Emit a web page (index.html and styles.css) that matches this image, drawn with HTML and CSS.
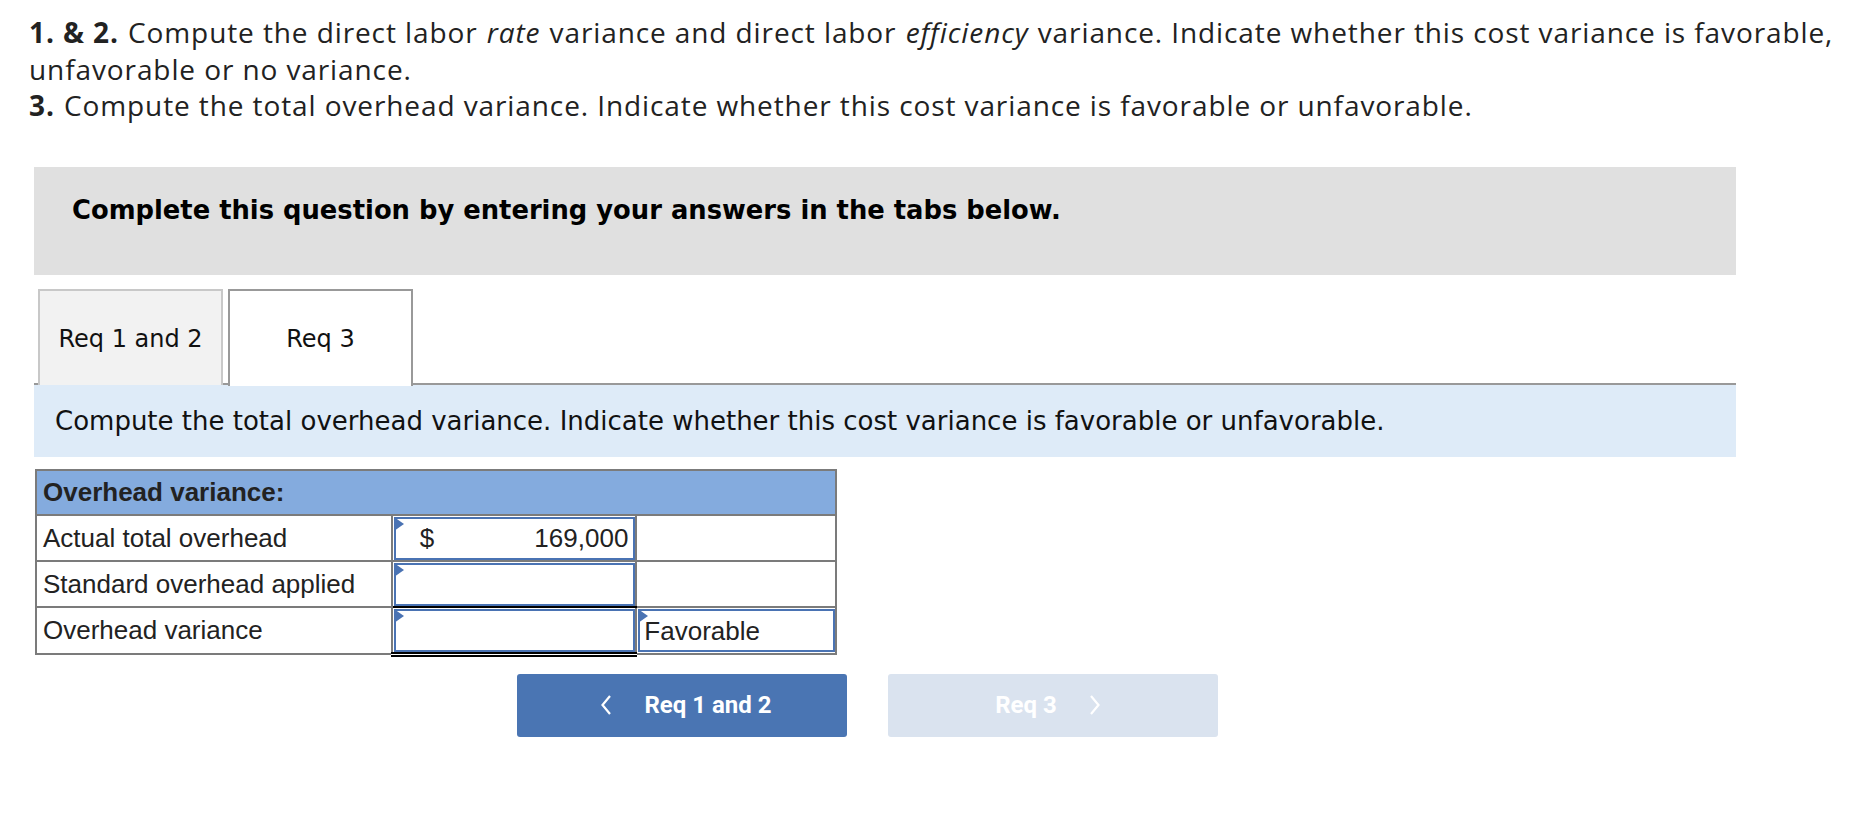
FILE: index.html
```html
<!DOCTYPE html>
<html>
<head>
<meta charset="utf-8">
<link rel="stylesheet" href="styles.css">
</head>
<body>
<div class="page">
  <div class="question">
    <div class="qline"><b>1. &amp; 2.</b> Compute the direct labor <i>rate</i> variance and direct labor <i>efficiency</i> variance. Indicate whether this cost variance is favorable,</div>
    <div class="qline">unfavorable or no variance.</div>
    <div class="qline"><b>3.</b> Compute the total overhead variance. Indicate whether this cost variance is favorable or unfavorable.</div>
  </div>

  <div class="panel">
    <div class="notice">Complete this question by entering your answers in the tabs below.</div>

    <div class="tabs">
      <div class="tab">Req 1 and 2</div>
      <div class="tab active">Req 3</div>
    </div>

    <div class="instr">Compute the total overhead variance. Indicate whether this cost variance is favorable or unfavorable.</div>

    <table class="grid">
      <colgroup>
        <col class="c1"><col class="c2"><col class="c3">
      </colgroup>
      <tr class="head"><th colspan="3">Overhead variance:</th></tr>
      <tr>
        <td class="label">Actual total overhead</td>
        <td class="inp"><div class="box"><span class="mark"></span><span class="cur">$</span><span class="val">169,000</span></div></td>
        <td></td>
      </tr>
      <tr>
        <td class="label">Standard overhead applied</td>
        <td class="inp single"><div class="box"><span class="mark"></span></div></td>
        <td></td>
      </tr>
      <tr>
        <td class="label">Overhead variance</td>
        <td class="inp double"><div class="box"><span class="mark"></span></div></td>
        <td class="inp"><div class="box"><span class="mark"></span><span class="txt">Favorable</span></div></td>
      </tr>
    </table>

    <div class="nav">
      <button class="btn prev"><svg class="chev" width="12" height="22" viewBox="0 0 12 22"><path d="M10 2 L2.5 11 L10 20" fill="none" stroke="#fff" stroke-width="2.2"/></svg><span>Req 1 and 2</span></button>
      <button class="btn next"><span>Req 3</span><svg class="chev" width="12" height="22" viewBox="0 0 12 22"><path d="M2 2 L9.5 11 L2 20" fill="none" stroke="#fff" stroke-width="2.2"/></svg></button>
    </div>
  </div>
</div>
</body>
</html>
```

FILE: styles.css
```css
html, body {
  margin: 0;
  padding: 0;
  background: #fff;
}

.page {
  padding: 14px 8px 0 29px;
}

.question {
  font-family: "Open Sans", Lato, sans-serif;
  font-size: 28px;
  letter-spacing: 0.9px;
  line-height: 36.5px;
  color: #222;
}

.qline {
  white-space: nowrap;
}

.question b {
  font-weight: 700;
  margin-right: 1px;
}

.question i {
  margin: 0 1px;
}

.panel {
  margin: 43px 0 0 5px;
  width: 1702px;
}

.notice {
  box-sizing: border-box;
  height: 108px;
  background: #e0e0e0;
  padding: 28px 0 0 38px;
  font-family: "DejaVu Sans", Verdana, sans-serif;
  font-weight: bold;
  font-size: 25.8px;
  line-height: 30px;
  color: #000;
}

.tabs {
  display: flex;
  gap: 5px;
  margin-top: 14px;
  padding-left: 4px;
  height: 96px;
  position: relative;
  z-index: 1;
}

.tab {
  box-sizing: border-box;
  width: 185px;
  height: 96px;
  display: flex;
  align-items: center;
  justify-content: center;
  background: #f2f2f2;
  border: 2px solid #c8c8c8;
  border-bottom: none;
  font-family: "DejaVu Sans", Verdana, sans-serif;
  font-size: 24px;
  color: #111;
  padding-top: 2px;
}

.tab.active {
  background: #fff;
  border-color: #999;
  height: 97px;
}

.instr {
  box-sizing: border-box;
  height: 74px;
  border-top: 2px solid #999;
  margin-top: -2px;
  background: #deebf8;
  display: flex;
  align-items: center;
  padding-left: 21px;
  font-family: "DejaVu Sans", Verdana, sans-serif;
  font-size: 26px;
  color: #111;
}

.grid {
  margin-top: 12px;
  margin-left: 1px;
  border-collapse: collapse;
  width: 802px;
  font-family: "Liberation Sans", Arial, sans-serif;
  font-size: 26px;
  line-height: 30px;
  color: #222;
}

.grid col.c1 { width: 357px; }
.grid col.c2 { width: 245px; }
.grid col.c3 { width: 200px; }

.grid th, .grid td {
  border: 2px solid #7b7b7b;
  padding: 0;
}

.grid tr.head th {
  background: #84abde;
  text-align: left;
  padding-left: 6px;
  font-weight: bold;
  line-height: 43px;
}

.grid td.label {
  padding-left: 6px;
}

.grid td.inp {
  padding: 1px 0 0 1px;
}

.grid td.single { border-bottom: 2px solid #000; }
.grid td.double { border-bottom: 5px double #000; }

.box {
  position: relative;
  box-sizing: border-box;
  height: 43px;
  border: 2px solid #4a73b3;
  background: #fff;
  display: flex;
  align-items: center;
}

.mark {
  position: absolute;
  left: -2px;
  top: -2px;
  width: 0;
  height: 0;
  border-left: 10px solid #4a73b3;
  border-top: 7px solid transparent;
  border-bottom: 7px solid transparent;
}

.cur { margin-left: 24px; }
.val { margin-left: auto; margin-right: 5px; }
.txt { margin-left: 4px; }

.nav {
  display: flex;
  gap: 41px;
  margin-top: 17px;
  padding-left: 483px;
}

.btn {
  box-sizing: border-box;
  width: 330px;
  height: 63px;
  border: none;
  border-radius: 3px;
  display: flex;
  align-items: center;
  justify-content: center;
  gap: 32px;
  font-family: Roboto, sans-serif;
  font-weight: bold;
  font-size: 24px;
  color: #fff;
  padding: 0;
}

.btn.prev {
  background: #4a75b3;
  padding-left: 8px;
}

.btn.next {
  background: #dae3ef;
  padding-right: 10px;
}
```
